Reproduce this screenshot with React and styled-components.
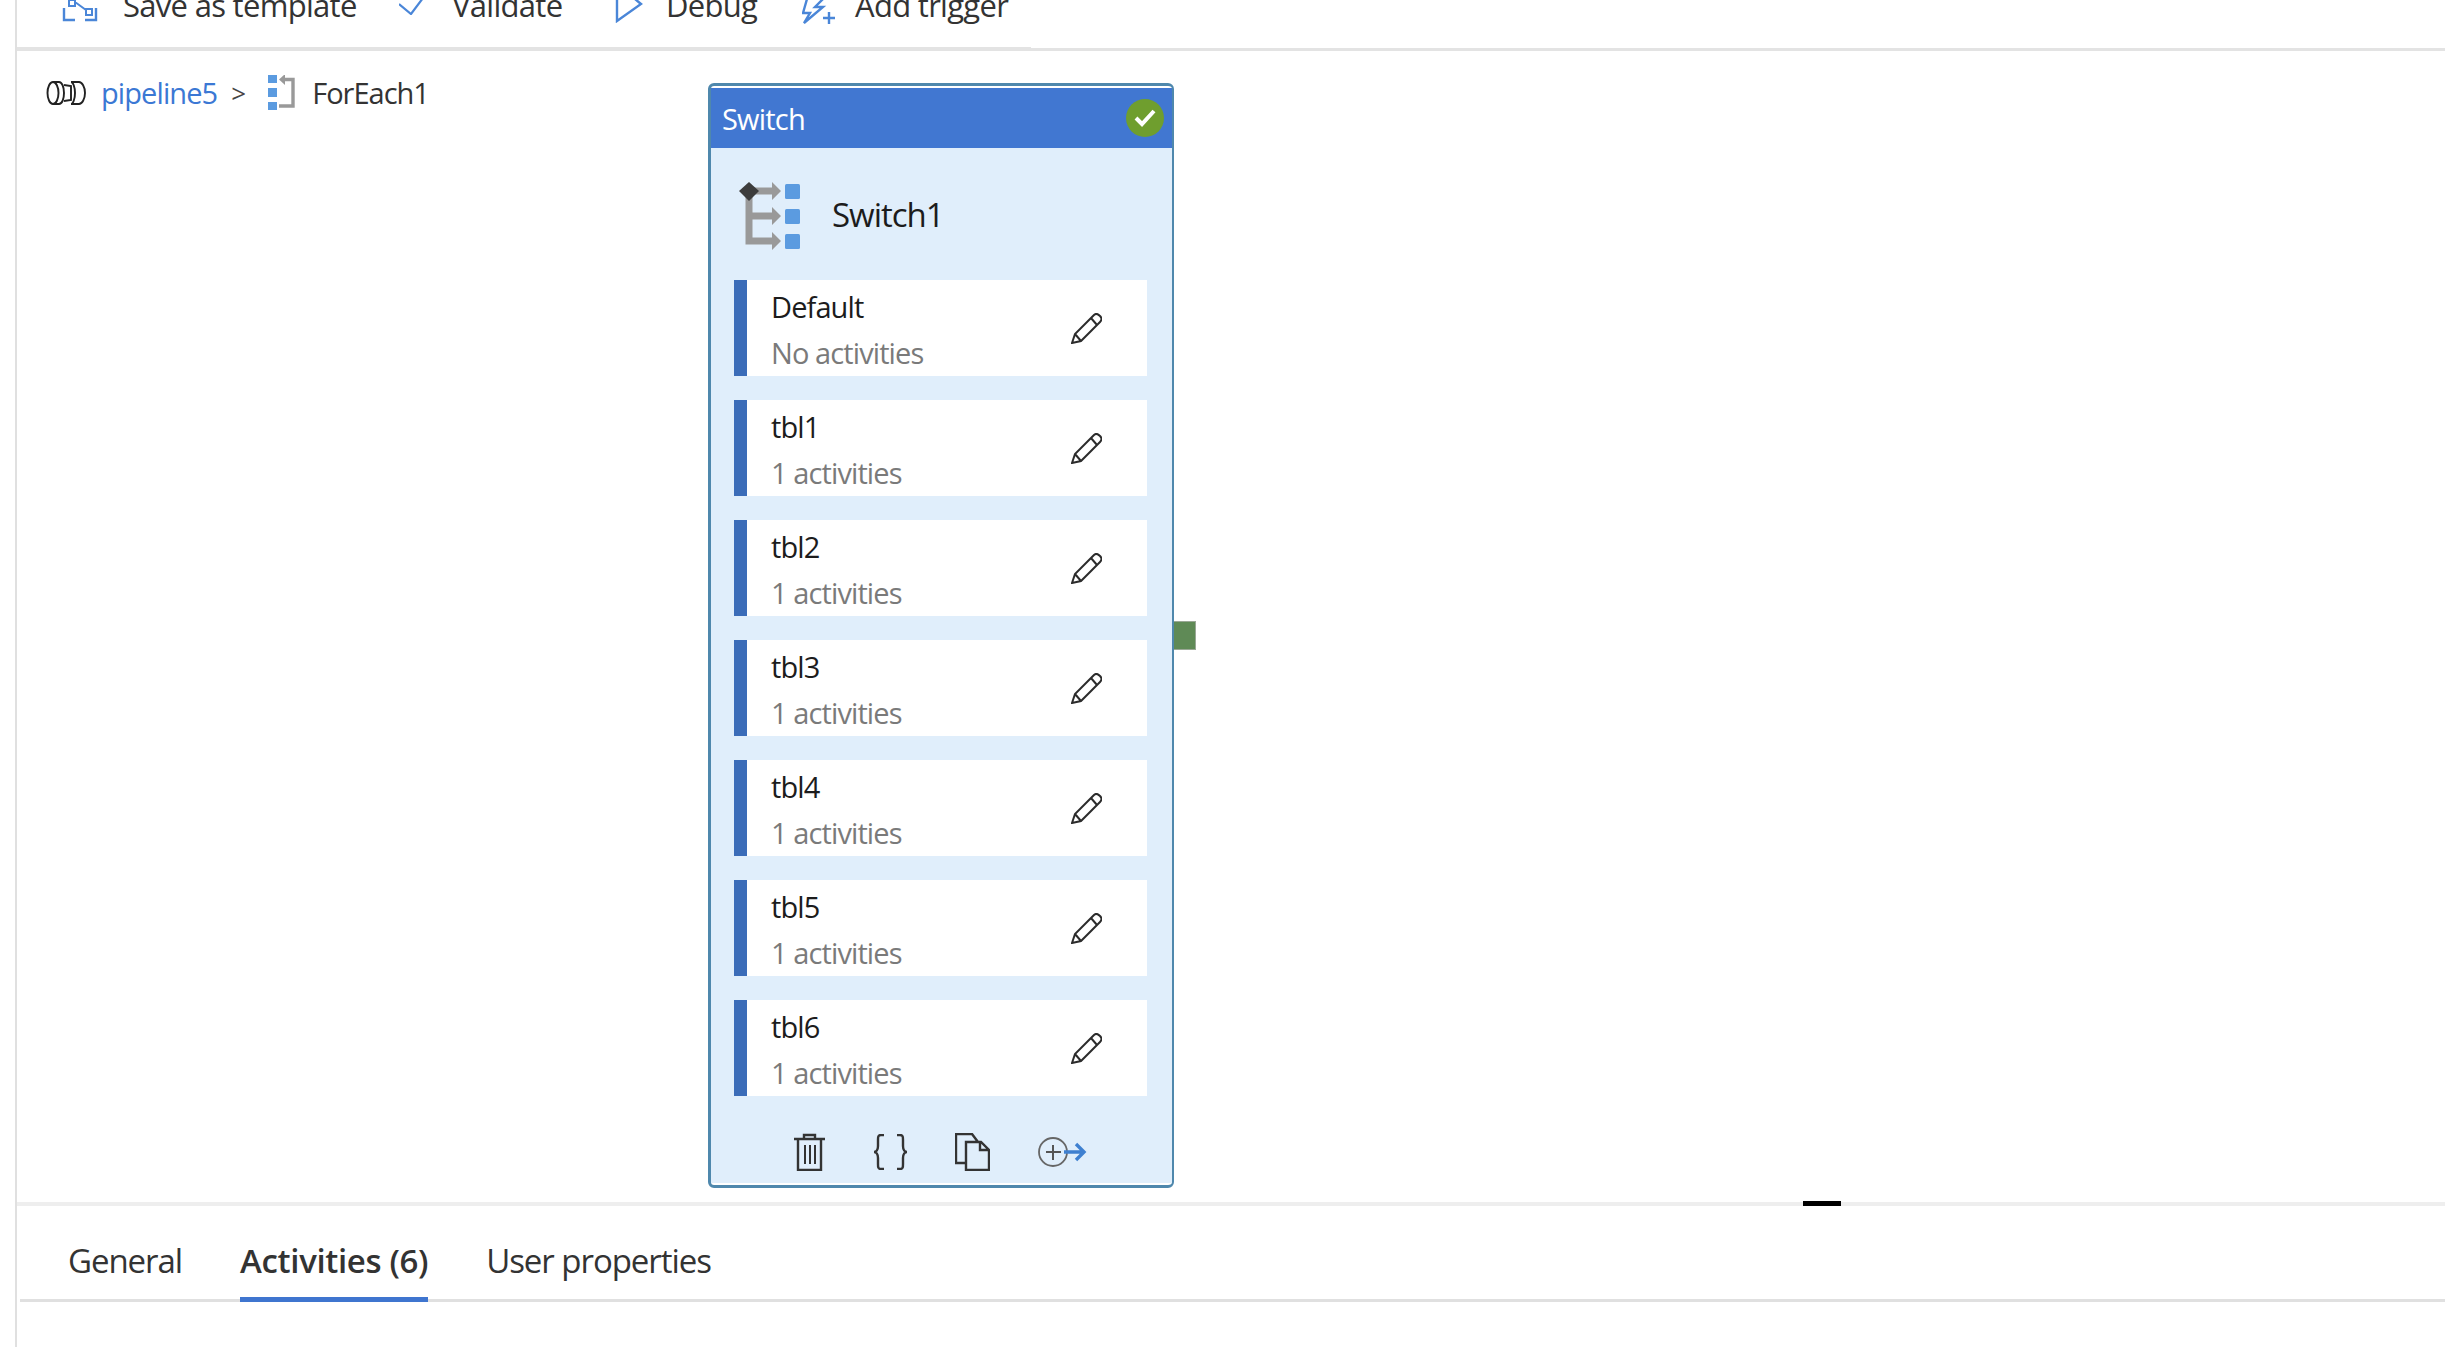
import React from 'react'
import styled, { createGlobalStyle } from 'styled-components'

const GlobalStyle = createGlobalStyle`
    html, body {
        margin: 0;
        padding: 0;
        background: #fff;
        overflow: hidden;
    }
    * {
        box-sizing: border-box;
    }
`

const Page = styled.div`
    width: 2445px;
    height: 1347px;
    padding-left: 15px;
    font-family: "Open Sans", "Noto Sans", sans-serif;
    overflow: hidden;
`

const Shell = styled.div`
    height: 100%;
    display: flex;
    flex-direction: column;
    border-left: 2px solid #e0e0e0;
`

const Toolbar = styled.div`
    position: relative;
    flex: none;
    height: 51px;
    padding-left: 45px;
    display: flex;
    align-items: flex-start;
    border-bottom: 3px solid #e3e3e3;
`

const ToolbarLine = styled.div`
    position: absolute;
    left: 0;
    bottom: 0;
    width: 1014px;
    height: 1px;
    background: #e3e3e3;
`

const ToolItem = styled.div`
    display: flex;
    align-items: flex-start;
    flex: none;
    width: ${p => p.$width}px;
    margin-top: -15px;
    height: 40px;
    gap: ${p => p.$gap}px;
`

const ToolIcon = styled.svg`
    flex: none;
    margin-top: 15px;
    overflow: hidden;
`

const ToolLabel = styled.span`
    font-size: 31px;
    letter-spacing: -0.7px;
    line-height: 40px;
    color: #333;
    white-space: nowrap;
`

const Canvas = styled.div`
    flex: none;
    height: 1151px;
    display: flex;
    align-items: flex-start;
`

const Breadcrumb = styled.div`
    flex: none;
    width: 691px;
    height: 60px;
    padding: 23px 0 0 29px;
    display: flex;
    align-items: center;
`

const CrumbLink = styled.span`
    margin-left: 15px;
    font-size: 29px;
    letter-spacing: -0.9px;
    color: #3b78d4;
`

const CrumbSep = styled.span`
    margin: 0 22px 0 14px;
    font-size: 26px;
    color: #444;
`

const CrumbCurrent = styled.span`
    margin-left: 17px;
    font-size: 29px;
    letter-spacing: -1px;
    color: #333;
`

const Card = styled.div`
    position: relative;
    flex: none;
    width: 466px;
    height: 1105px;
    margin-top: 32px;
    padding: 2px 0;
    background: #fff;
    border-style: solid;
    border-color: #4f88ad;
    border-width: 3px 2px 3px 3px;
    border-radius: 6px;
    display: flex;
    flex-direction: column;
`

const CardHeader = styled.div`
    flex: none;
    height: 60px;
    padding: 0 8px 0 11px;
    display: flex;
    align-items: center;
    justify-content: space-between;
    background: #4177d1;
    color: #fff;
    font-size: 29px;
    letter-spacing: -0.8px;
`

const StatusDot = styled.div`
    width: 38px;
    height: 38px;
    border-radius: 50%;
    background: #6f9e2e;
    display: flex;
    align-items: center;
    justify-content: center;
`

const CardBody = styled.div`
    flex: 1;
    display: flex;
    flex-direction: column;
    background: #e0eefb;
    padding: 0 25px 0 23px;
`

const TitleRow = styled.div`
    flex: none;
    height: 132px;
    padding-left: 5px;
    display: flex;
    align-items: center;
    gap: 32px;
`

const SwitchGlyph = styled.svg`
    margin-top: 4px;
`

const ActivityName = styled.span`
    font-size: 33px;
    letter-spacing: -1px;
    color: #1c1c1c;
`

const CaseList = styled.div`
    display: flex;
    flex-direction: column;
    gap: 24px;
`

const CaseRow = styled.div`
    height: 96px;
    display: flex;
    align-items: center;
    background: #fff;
    border-left: 13px solid #3b6cb8;
    padding: 0 45px 0 24px;
`

const CaseText = styled.div`
    flex: 1;
    display: flex;
    flex-direction: column;
    gap: 4px;
    margin-top: 4px;
`

const CaseName = styled.div`
    font-size: 29px;
    line-height: 42px;
    letter-spacing: -0.9px;
    color: #1c1c1c;
`

const CaseCount = styled.div`
    font-size: 29px;
    line-height: 42px;
    letter-spacing: -0.9px;
    color: #7a7a7a;
`

const CardActions = styled.div`
    flex: 1;
    display: flex;
    align-items: center;
    padding: 24px 0 0 60px;
`

const ActionSlot = styled.div`
    display: flex;
    width: ${p => p.$width}px;
`

const OutputPort = styled.div`
    position: absolute;
    right: -24px;
    top: 50%;
    width: 22px;
    height: 29px;
    margin-top: -15px;
    background: #5f8a56;
    border: 1px solid #9aa896;
    border-left: none;
`

const Resizer = styled.div`
    position: relative;
    flex: none;
    height: 4px;
    background: #eeeeee;
`

const ResizeHandle = styled.div`
    position: absolute;
    left: 1786px;
    top: -1px;
    width: 38px;
    height: 5px;
    background: #000;
`

const Panel = styled.div`
    flex: 1;
`

const TabBar = styled.div`
    height: 96px;
    margin-left: 3px;
    padding-left: 48px;
    display: flex;
    gap: 58px;
    border-bottom: 3px solid #e0e0e0;
`

const Tab = styled.div`
    height: 96px;
    padding-top: 33px;
    font-size: 33px;
    line-height: 44px;
    letter-spacing: ${p => (p.$active ? '-0.35px' : '-1.05px')};
    font-weight: ${p => (p.$active ? 600 : 400)};
    color: #333;
    white-space: nowrap;
    border-bottom: 5px solid ${p => (p.$active ? '#3f75cf' : 'transparent')};
`

const SaveIcon = () => (
    <ToolIcon width="36" height="22" viewBox="0 0 36 22" fill="none" stroke="#4a86d8" strokeWidth="2.4">
        <path d="M2 8v12h11M23 20h11V8" />
        <path d="M7 0h6v6H7zM24 9h6v6h-6zM13 2l11 8" strokeWidth="2" />
    </ToolIcon>
)

const CheckIcon = () => (
    <ToolIcon width="29" height="15" viewBox="0 0 29 15" fill="none" stroke="#4a86d8" strokeWidth="2.2">
        <path d="M0 4l12 10L27-6" />
    </ToolIcon>
)

const PlayIcon = () => (
    <ToolIcon width="28" height="23" viewBox="0 0 28 23" fill="none" stroke="#4a86d8" strokeWidth="2.4">
        <path d="M2-6v27L26 4 2-16" />
    </ToolIcon>
)

const TriggerIcon = () => (
    <ToolIcon width="34" height="24" viewBox="0 0 34 24" fill="none" stroke="#4a86d8" strokeWidth="2.4">
        <path d="M5-1L1 13h7L2 23 21 7h-8l8-8" />
        <path d="M21 18h12M27 12v12" />
    </ToolIcon>
)

const PipelineIcon = () => (
    <svg width="40" height="24" viewBox="0 0 40 24" fill="none" stroke="#222" strokeWidth="1.9">
        <ellipse cx="7" cy="12" rx="5.5" ry="11" />
        <path d="M7 1h6c3 0 5 5 5 11s-2 11-5 11H7" />
        <path d="M18 4l7 1v14l-7 1" />
        <path d="M25 1h8c3 0 6 5 6 11s-3 11-6 11h-8c2 0 4-5 4-11S27 1 25 1z" />
    </svg>
)

const ForEachIcon = () => (
    <svg width="27" height="35" viewBox="0 0 27 35" fill="none">
        <path d="M0 0h9v8H0zM0 13h9v9H0zM0 27h9v8H0z" fill="#5b9be0" />
        <path d="M16 4.500h9V31H11" stroke="#999" strokeWidth="3.4" />
        <path d="M17-1v11l-6-5.500z" fill="#999" />
    </svg>
)

const SwitchIcon = () => (
    <SwitchGlyph width="61" height="68" viewBox="0 0 61 68">
        <path d="M10 9h26M10 9v50h26M10 34h26" fill="none" stroke="#999" strokeWidth="7" />
        <path d="M33 0l9 9-9 9zM33 25l9 9-9 9zM33 50l9 9-9 9z" fill="#999" />
        <path d="M10 0l10 9-10 10L0 9z" fill="#3c3c3c" />
        <rect x="46" y="2" width="15" height="15" rx="1.5" fill="#5b9be0" />
        <rect x="46" y="27" width="15" height="15" rx="1.5" fill="#5b9be0" />
        <rect x="46" y="52" width="15" height="15" rx="1.5" fill="#5b9be0" />
    </SwitchGlyph>
)

const TickIcon = () => (
    <svg width="22" height="18" viewBox="0 0 22 18" fill="none" stroke="#fff" strokeWidth="4">
        <path d="M2 9l6 6L20 2" />
    </svg>
)

const PencilIcon = () => (
    <svg width="31" height="31" viewBox="0 0 31 31" fill="none" stroke="#2c2c2c" strokeWidth="2">
        <path d="M1 30l3-9L23 2c2-2 4-1 6 1s2 4 0 6L10 28zM4 21l6 7M20 5l6 7" />
    </svg>
)

const TrashIcon = () => (
    <svg width="31" height="38" viewBox="0 0 31 38" fill="none" stroke="#333" strokeWidth="2.4">
        <path d="M0 6h31M10 6V2h11v4M4 6v31h23V6" />
        <path d="M11 12v19M16 12v19M21 12v19" strokeWidth="2" />
    </svg>
)

const BracesIcon = () => (
    <svg width="35" height="36" viewBox="0 0 35 36" fill="none" stroke="#333" strokeWidth="2.4">
        <path d="M11 1H8C5 1 5 3 5 6v6c0 4-2 6-4 6 2 0 4 2 4 6v6c0 3 0 5 3 5h3M24 1h3c3 0 3 2 3 5v6c0 4 2 6 4 6-2 0-4 2-4 6v6c0 3 0 5-3 5h-3" />
    </svg>
)

const CopyIcon = () => (
    <svg width="35" height="38" viewBox="0 0 35 38" fill="none" stroke="#333" strokeWidth="2.4">
        <path d="M11 30H1V1h16l6 8M11 9h15l8 8v20H11zM25 9v8h9" />
    </svg>
)

const AddOutputIcon = () => (
    <svg width="49" height="30" viewBox="0 0 49 30" fill="none">
        <circle cx="15" cy="15" r="14" stroke="#666" strokeWidth="1.8" />
        <path d="M8 15h15M15 8v15" stroke="#555" strokeWidth="2" />
        <path d="M26 15h20M38 7l8 8-8 8" stroke="#3f80d0" strokeWidth="3.4" />
    </svg>
)

const cases = [
    { name: 'Default', count: 'No activities' },
    { name: 'tbl1', count: '1 activities' },
    { name: 'tbl2', count: '1 activities' },
    { name: 'tbl3', count: '1 activities' },
    { name: 'tbl4', count: '1 activities' },
    { name: 'tbl5', count: '1 activities' },
    { name: 'tbl6', count: '1 activities' },
]

const App = () => {
    return (
        <Page>
            <GlobalStyle />
            <Shell>
                <Toolbar>
                    <ToolbarLine />
                    <ToolItem $width={337} $gap={25}>
                        <SaveIcon />
                        <ToolLabel>Save as template</ToolLabel>
                    </ToolItem>
                    <ToolItem $width={216} $gap={24}>
                        <CheckIcon />
                        <ToolLabel>Validate</ToolLabel>
                    </ToolItem>
                    <ToolItem $width={187} $gap={23}>
                        <PlayIcon />
                        <ToolLabel>Debug</ToolLabel>
                    </ToolItem>
                    <ToolItem $width={260} $gap={19}>
                        <TriggerIcon />
                        <ToolLabel>Add trigger</ToolLabel>
                    </ToolItem>
                </Toolbar>
                <Canvas>
                    <Breadcrumb>
                        <PipelineIcon />
                        <CrumbLink>pipeline5</CrumbLink>
                        <CrumbSep>&gt;</CrumbSep>
                        <ForEachIcon />
                        <CrumbCurrent>ForEach1</CrumbCurrent>
                    </Breadcrumb>
                    <Card>
                        <CardHeader>
                            Switch
                            <StatusDot><TickIcon /></StatusDot>
                        </CardHeader>
                        <CardBody>
                            <TitleRow>
                                <SwitchIcon />
                                <ActivityName>Switch1</ActivityName>
                            </TitleRow>
                            <CaseList>
                                {cases.map(c => (
                                    <CaseRow key={c.name}>
                                        <CaseText>
                                            <CaseName>{c.name}</CaseName>
                                            <CaseCount>{c.count}</CaseCount>
                                        </CaseText>
                                        <PencilIcon />
                                    </CaseRow>
                                ))}
                            </CaseList>
                            <CardActions>
                                <ActionSlot $width={79}><TrashIcon /></ActionSlot>
                                <ActionSlot $width={82}><BracesIcon /></ActionSlot>
                                <ActionSlot $width={83}><CopyIcon /></ActionSlot>
                                <ActionSlot $width={49}><AddOutputIcon /></ActionSlot>
                            </CardActions>
                        </CardBody>
                        <OutputPort />
                    </Card>
                </Canvas>
                <Resizer>
                    <ResizeHandle />
                </Resizer>
                <Panel>
                    <TabBar>
                        <Tab>General</Tab>
                        <Tab $active>Activities (6)</Tab>
                        <Tab>User properties</Tab>
                    </TabBar>
                </Panel>
            </Shell>
        </Page>
    )
}

export default App
